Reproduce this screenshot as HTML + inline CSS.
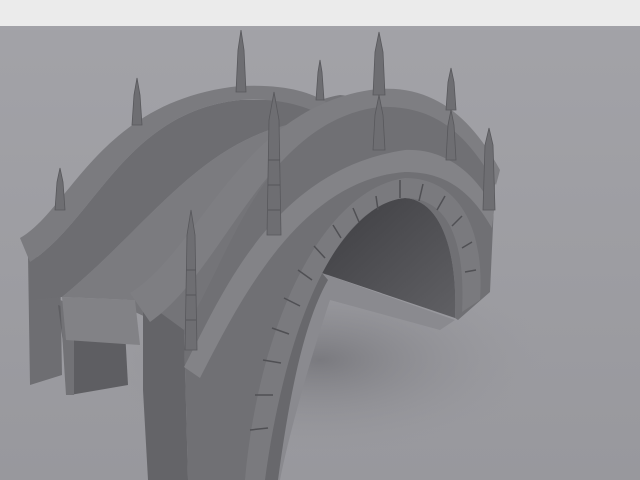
<!DOCTYPE html>
<html><head><style>html,body{margin:0;padding:0;width:640px;height:480px;overflow:hidden;background:#9b9ba0}</style></head>
<body>
<svg width="640" height="480" viewBox="0 0 640 480" xmlns="http://www.w3.org/2000/svg" style="display:block">
<defs>
<linearGradient id="bg" x1="0" y1="0" x2="0" y2="1">
<stop offset="0" stop-color="#a3a3a8"/><stop offset="1" stop-color="#98989d"/></linearGradient>
<radialGradient id="sh" cx="0.5" cy="0.5" r="0.5"><stop offset="0" stop-color="#7a7a7f"/><stop offset="1" stop-color="#9a9a9f" stop-opacity="0"/></radialGradient>
<linearGradient id="inr" x1="0" y1="0" x2="1" y2="1"><stop offset="0" stop-color="#3e3e42"/><stop offset="1" stop-color="#606064"/></linearGradient>
</defs>
<rect width="640" height="480" fill="url(#bg)"/>
<rect width="640" height="26" fill="#ebebeb"/>
<ellipse cx="320" cy="360" rx="230" ry="100" fill="url(#sh)"/>
<!-- left end wall -->
<polygon points="28,255 60,262 62,375 30,385" fill="#6e6e72"/>
<polygon points="58,305 125,330 128,385 70,395" fill="#5e5e62"/>
<polygon points="60,300 74,305 74,395 66,395" fill="#727276"/>
<!-- right parapet inner face filler -->
<path d="M120,305 C200,250 240,112 340,95 L385,100 C260,125 230,260 184,335 Z" fill="#747478"/>
<!-- deck -->
<path d="M62,297 C150,225 200,140 300,122 L345,98 C250,112 210,250 135,300 Z" fill="#7b7b7f"/>
<path d="M62,297 L135,300 L140,345 L66,340 Z" fill="#828286"/>
<!-- left parapet inner face -->
<path d="M30,262 C95,220 125,112 240,100 L322,100 L300,122 C200,140 150,225 62,297 L30,300 Z" fill="#6d6d71"/>
<path d="M20,238 C70,210 100,100 240,86 C285,84 310,92 326,102 L320,114 C300,104 275,98 240,100 C125,112 95,220 30,262 Z" fill="#7b7b7f"/>
<!-- near side face of front wall -->
<polygon points="143,300 184,330 188,480 148,480 143,390" fill="#646468"/>
<!-- front wall -->
<path fill="#707074" d="M184,330 C230,260 260,125 380,105 C440,102 470,140 495,182 L490,292 L458,320 L455,318 C458,250 440,200 405,198 C340,205 295,330 268,480 L188,480 Z"/>
<!-- arch inner -->
<path d="M268,480 C285,380 300,300 322,273 L455,320 L440,330 L330,300 C310,360 290,430 280,480 Z" fill="#8a8a8f"/>
<path d="M322,273 C345,230 375,200 405,198 C440,200 458,250 455,318 Z" fill="url(#inr)"/>
<path d="M262,480 C275,380 300,300 322,273 L328,280 C305,320 290,390 278,480 Z" fill="#68686c"/>
<!-- voussoir ring -->
<path d="M245,480 C258,330 320,190 405,178 C460,178 485,230 480,300 L462,312 C466,235 445,198 405,198 C335,205 285,330 265,480 Z" fill="#7a7a7e"/>
<g stroke="#505054" stroke-width="1.5">
<line x1="250" y1="430" x2="268" y2="428"/><line x1="255" y1="395" x2="273" y2="395"/><line x1="263" y1="360" x2="281" y2="363"/><line x1="272" y1="328" x2="289" y2="334"/><line x1="284" y1="298" x2="300" y2="306"/><line x1="298" y1="270" x2="312" y2="280"/><line x1="314" y1="246" x2="325" y2="258"/><line x1="333" y1="225" x2="341" y2="238"/><line x1="353" y1="208" x2="359" y2="222"/><line x1="376" y1="196" x2="378" y2="210"/><line x1="400" y1="180" x2="400" y2="198"/><line x1="423" y1="184" x2="419" y2="201"/><line x1="445" y1="196" x2="437" y2="210"/><line x1="462" y1="216" x2="452" y2="226"/><line x1="472" y1="242" x2="462" y2="248"/><line x1="476" y1="270" x2="465" y2="272"/>
</g>
<!-- arch molding band -->
<path d="M184,367 C220,300 270,170 405,150 C450,148 480,180 494,210 L492,228 C470,190 445,172 405,172 C300,180 240,300 200,378 Z" fill="#838387"/>
<!-- right rail -->
<path d="M130,293 C200,250 240,110 370,90 C430,82 470,115 500,170 L496,185 C470,140 440,105 380,107 C265,120 225,270 150,322 Z" fill="#7e7e82"/>
<!-- spires -->
<g fill="#6e6e72" stroke="#58585c" stroke-width="0.8">
<path d="M236,92 L238,50 L241,30 L244,50 L246,92 Z"/>
<path d="M373,95 L375,52 L379,32 L383,52 L385,95 Z"/>
<path d="M132,125 L134,95 L137,78 L140,95 L142,125 Z"/>
<path d="M316,100 L318,72 L320,60 L322,72 L324,100 Z"/>
<path d="M446,110 L448,82 L451,68 L454,82 L456,110 Z"/>
<path d="M483,210 L485,145 L489,128 L493,145 L495,210 Z"/>
<path d="M55,210 L57,182 L60,168 L63,182 L65,210 Z"/>
<path d="M267,235 L269,120 L274,92 L279,120 L281,235 Z"/>
<path d="M185,350 L187,235 L191,210 L195,235 L197,350 Z"/>
<path d="M373,150 L375,115 L379,95 L383,115 L385,150 Z"/>
<path d="M446,160 L448,125 L451,110 L454,125 L456,160 Z"/>
</g>
<g stroke="#55555a" stroke-width="1">
<line x1="268" y1="160" x2="280" y2="160"/><line x1="268" y1="185" x2="280" y2="185"/><line x1="268" y1="210" x2="280" y2="210"/>
<line x1="186" y1="270" x2="196" y2="270"/><line x1="186" y1="295" x2="196" y2="295"/><line x1="186" y1="320" x2="196" y2="320"/>
</g>
</svg>
</body></html>
